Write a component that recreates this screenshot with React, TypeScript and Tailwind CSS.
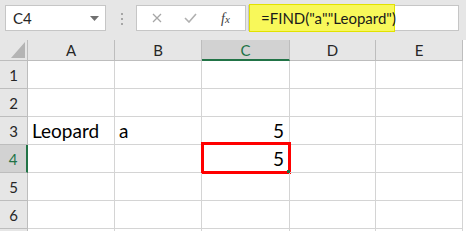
import React from "react";

const COLS = ["A", "B", "C", "D", "E"];
const ROWS = [1, 2, 3, 4, 5, 6, 7];

const cellText: Record<string, { text: string; right?: boolean }> = {
  A3: { text: "Leopard" },
  B3: { text: "a" },
  C3: { text: "5", right: true },
  C4: { text: "5", right: true },
};

function NameBox() {
  return (
    <div className="ml-[5px] flex h-[26px] w-[101px] items-center justify-between border border-[#c6c6c6] bg-white pl-[7px] pr-[6px]">
      <span className="text-[15px] text-[#262626]">C4</span>
      <svg width="9" height="5" viewBox="0 0 9 5">
        <path d="M0 0 H9 L4.5 5 Z" fill="#707070" />
      </svg>
    </div>
  );
}

function FormulaButtons() {
  return (
    <div className="ml-[13px] flex h-[26px] w-[110px] items-center border border-[#c6c6c6] bg-white">
      <svg className="ml-[15px]" width="10" height="10" viewBox="0 0 10 10">
        <path d="M1 1 L9 9 M9 1 L1 9" stroke="#a6a6a6" strokeWidth="1.3" />
      </svg>
      <svg className="ml-[22px]" width="13" height="10" viewBox="0 0 13 10">
        <path d="M1 5 L5 9 L12 1" stroke="#b0b0b0" strokeWidth="1.6" fill="none" />
      </svg>
      <span className="ml-[24px] font-['Liberation_Serif',serif] text-[14px] italic text-[#404040]">
        f<span className="text-[11px]">x</span>
      </span>
    </div>
  );
}

export default function App() {
  return (
    <div className="h-[231px] w-[466px] overflow-hidden bg-[#e6e6e6] font-['Lato','Liberation_Sans',sans-serif]">
      {/* formula bar */}
      <div className="flex h-[40px] items-start pt-[5px]">
        <NameBox />
        <div className="ml-[15px] mt-[8px] flex flex-col gap-[3px]">
          <span className="block h-[2px] w-[2px] bg-[#a6a6a6]" />
          <span className="block h-[2px] w-[2px] bg-[#a6a6a6]" />
          <span className="block h-[2px] w-[2px] bg-[#a6a6a6]" />
        </div>
        <FormulaButtons />
        <div className="ml-[2px] flex h-[26px] w-[211px] items-center border border-[#c6c6c6] bg-white">
          <div className="-my-[2px] flex h-[28px] w-[146px] items-center border border-[#e2e200] bg-[#f8f85a] pl-[11px] text-[15px] text-[#1a1a1a]">
            =FIND("a","Leopard")
          </div>
        </div>
      </div>

      {/* sheet */}
      <div className="grid grid-cols-[28px_87px_87px_88px_86px_87px] grid-rows-[21px_28px_28px_28px_28px_28px_28px_28px] bg-white">
        <div className="flex items-end justify-end border-b border-r border-[#bdbdbd] bg-[#e6e6e6] pb-[2px] pr-[2px]">
          <svg width="14" height="16" viewBox="0 0 14 16">
            <path d="M14 0 V16 H0 Z" fill="#b4b4b4" />
          </svg>
        </div>
        {COLS.map((c) =>
          c === "C" ? (
            <div
              key={c}
              className="flex items-center justify-center border-b-2 border-r border-b-[#217346] border-r-[#bdbdbd] bg-[#d2d2d2] pt-[1px] text-[15px] text-[#217346]"
            >
              {c}
            </div>
          ) : (
            <div
              key={c}
              className="flex items-center justify-center border-b border-r border-[#bdbdbd] bg-[#e6e6e6] pt-[1px] text-[15px] text-[#262626]"
            >
              {c}
            </div>
          ),
        )}
        {ROWS.map((r) => (
          <React.Fragment key={r}>
            {r === 4 ? (
              <div className="flex items-center justify-center border-b border-r-2 border-b-[#bdbdbd] border-r-[#217346] bg-[#d2d2d2] pt-[2px] text-[15px] text-[#217346]">
                {r}
              </div>
            ) : (
              <div className="flex items-center justify-center border-b border-r border-[#bdbdbd] bg-[#e6e6e6] pt-[2px] text-[15px] text-[#262626]">
                {r < 7 ? r : null}
              </div>
            )}
            {COLS.map((c) => {
              const id = `${c}${r}`;
              const t = cellText[id];
              return (
                <div
                  key={id}
                  className={`relative flex items-end border-b border-r border-[#d4d4d4] pb-[2px] text-[19px] leading-[22px] text-black ${
                    t?.right ? "justify-end pr-[5px]" : "pl-[4px]"
                  }`}
                >
                  {t?.text}
                  {id === "C4" && (
                    <div className="absolute -bottom-[2px] -left-[1px] -right-[2px] -top-[3px] border-[3px] border-[#ff0000]">
                      <span className="absolute -bottom-[2px] -right-[2px] h-[3px] w-[3px] bg-[#217346]" />
                    </div>
                  )}
                </div>
              );
            })}
          </React.Fragment>
        ))}
      </div>
    </div>
  );
}
